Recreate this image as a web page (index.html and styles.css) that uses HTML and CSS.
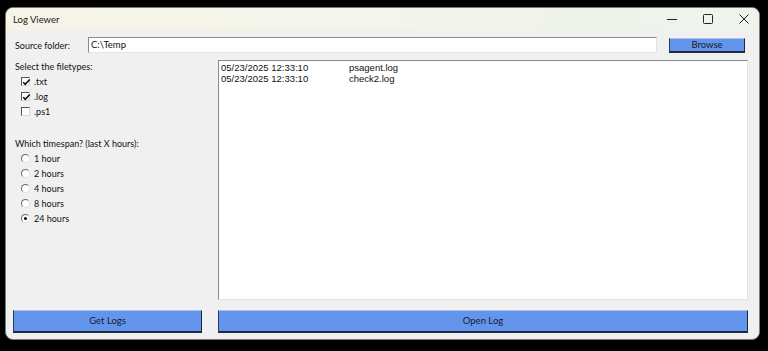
FILE: index.html
```html
<!DOCTYPE html>
<html>
<head>
<meta charset="utf-8">
<link rel="stylesheet" href="styles.css">
</head>
<body>
<div class="window">
  <div class="titlebar">
    <span class="title">Log Viewer</span>
    <div class="controls">
      <svg class="ctl" width="12" height="12" viewBox="0 0 12 12"><path d="M1 6.5h10" stroke="#222" stroke-width="1"/></svg>
      <svg class="ctl" width="12" height="12" viewBox="0 0 12 12"><rect x="1.5" y="1.5" width="9" height="9" rx="1" fill="none" stroke="#222" stroke-width="1"/></svg>
      <svg class="ctl" width="12" height="12" viewBox="0 0 12 12"><path d="M1.5 1.5l9 9M10.5 1.5l-9 9" stroke="#222" stroke-width="1"/></svg>
    </div>
  </div>
  <div class="content">
    <div class="source-row">
      <span class="label src-label">Source folder:</span>
      <div class="textbox">C:\Temp</div>
      <button class="btn browse">Browse</button>
    </div>
    <div class="main">
      <div class="options">
        <div class="label heading">Select the filetypes:</div>
        <div class="opt"><span class="check on"><svg width="9" height="9" viewBox="0 0 9 9"><path d="M1.2 4.2l2 2.2L7.8 1.5" fill="none" stroke="#111" stroke-width="1.6"/></svg></span><span class="label">.txt</span></div>
        <div class="opt"><span class="check on"><svg width="9" height="9" viewBox="0 0 9 9"><path d="M1.2 4.2l2 2.2L7.8 1.5" fill="none" stroke="#111" stroke-width="1.6"/></svg></span><span class="label">.log</span></div>
        <div class="opt"><span class="check"></span><span class="label">.ps1</span></div>
        <div class="label heading heading2">Which timespan? (last X hours):</div>
        <div class="opt"><span class="radio"></span><span class="label">1 hour</span></div>
        <div class="opt"><span class="radio"></span><span class="label">2 hours</span></div>
        <div class="opt"><span class="radio"></span><span class="label">4 hours</span></div>
        <div class="opt"><span class="radio"></span><span class="label">8 hours</span></div>
        <div class="opt"><span class="radio sel"></span><span class="label">24 hours</span></div>
      </div>
      <div class="listbox">
        <div class="row"><span class="ts">05/23/2025 12:33:10</span><span class="fn">psagent.log</span></div>
        <div class="row"><span class="ts">05/23/2025 12:33:10</span><span class="fn">check2.log</span></div>
      </div>
    </div>
    <div class="buttons">
      <button class="btn big getlogs">Get Logs</button>
      <button class="btn big openlog">Open Log</button>
    </div>
  </div>
</div>
</body>
</html>
```
FILE: styles.css
```css
html, body {
  margin: 0;
  padding: 0;
  background: #000;
  width: 768px;
  height: 351px;
  overflow: hidden;
}
.window {
  margin: 7px 0 0 5px;
  width: 755px;
  height: 333px;
  box-sizing: border-box;
  background: #f0f0f0;
  border: 1px solid #7a7a7a;
  border-radius: 8px;
  overflow: hidden;
  display: flex;
  flex-direction: column;
  font-family: Lato, "Noto Sans", sans-serif;
  font-size: 9px;
  color: #111;
}
.titlebar {
  height: 22px;
  flex: none;
  display: flex;
  align-items: center;
  justify-content: space-between;
  background: linear-gradient(90deg, #f6f4e8 0%, #f5f4ea 40%, #eef3ea 75%, #eef4ec 100%);
  padding-left: 7px;
}
.title {
  font-size: 9.5px;
  color: #1a1a1a;
}
.controls {
  display: flex;
  gap: 24px;
  padding-right: 9px;
  align-items: center;
}
.ctl { display: block; }
.content {
  flex: 1;
  display: flex;
  flex-direction: column;
  padding: 7px 11px 0 7px;
}
.source-row {
  display: flex;
  align-items: center;
  height: 16px;
}
.src-label {
  width: 73px;
  padding-left: 2px;
  flex: none;
}
.textbox {
  width: 569px;
  height: 16px;
  box-sizing: border-box;
  background: #fff;
  border-top: 1px solid #8a8a8a;
  border-left: 1px solid #8a8a8a;
  border-right: 1px solid #e3e3e3;
  border-bottom: 1px solid #e3e3e3;
  font-family: Lato, "Noto Sans", sans-serif;
  font-size: 9.5px;
  line-height: 14px;
  padding-left: 2px;
  flex: none;
}
.btn {
  background: #6495ed;
  border: none;
  border-top: 1px solid #a9c2f0;
  border-left: 1px solid #2a3a5a;
  border-right: 1px solid #1e2a44;
  border-bottom: 2px solid #1e2a44;
  box-sizing: border-box;
  font-family: Lato, "Noto Sans", sans-serif;
  font-size: 9.5px;
  color: #1a1a2a;
  padding: 0;
  margin: 0;
}
.browse {
  margin-left: 12px;
  width: 76px;
  height: 15px;
  line-height: 11px;
}
.main {
  display: flex;
  margin-top: 7px;
  height: 240px;
}
.options {
  width: 205px;
  flex: none;
  display: flex;
  flex-direction: column;
  padding-left: 2px;
  box-sizing: border-box;
}
.heading {
  height: 14px;
  line-height: 14px;
  margin-top: 0;
}
.heading2 {
  margin-top: 18px;
}
.opt {
  display: flex;
  align-items: center;
  height: 15px;
  padding-left: 6px;
}
.opt .label { margin-left: 4px; }
.check {
  width: 9px;
  height: 9px;
  box-sizing: border-box;
  background: #fff;
  border-top: 1px solid #555;
  border-left: 1px solid #555;
  border-right: 1px solid #d8d8d8;
  border-bottom: 1px solid #d8d8d8;
  position: relative;
  flex: none;
}
.check svg {
  position: absolute;
  left: -0.5px;
  top: -0.5px;
}
.radio {
  width: 9px;
  height: 9px;
  box-sizing: border-box;
  border-radius: 50%;
  background: #fff;
  border-top: 1px solid #6a6a6a;
  border-left: 1px solid #6a6a6a;
  border-right: 1px solid #e0e0e0;
  border-bottom: 1px solid #e0e0e0;
  position: relative;
  flex: none;
}
.radio.sel::after {
  content: "";
  position: absolute;
  left: 2px;
  top: 2px;
  width: 3px;
  height: 3px;
  border-radius: 50%;
  background: #000;
}
.listbox {
  width: 530px;
  height: 240px;
  box-sizing: border-box;
  background: #fff;
  border-top: 1px solid #8a8a8a;
  border-left: 1px solid #8a8a8a;
  border-right: 1px solid #e3e3e3;
  border-bottom: 1px solid #e3e3e3;
  font-family: "Liberation Sans", Arial, sans-serif;
  font-size: 9.5px;
  padding: 1px 0 0 2px;
}
.row {
  display: flex;
  height: 11px;
  line-height: 11px;
}
.ts { width: 128px; }
.buttons {
  display: flex;
  margin-top: 10px;
  gap: 16px;
}
.big {
  height: 23px;
  line-height: 18px;
}
.getlogs { width: 189px; }
.openlog { width: 530px; }
```
